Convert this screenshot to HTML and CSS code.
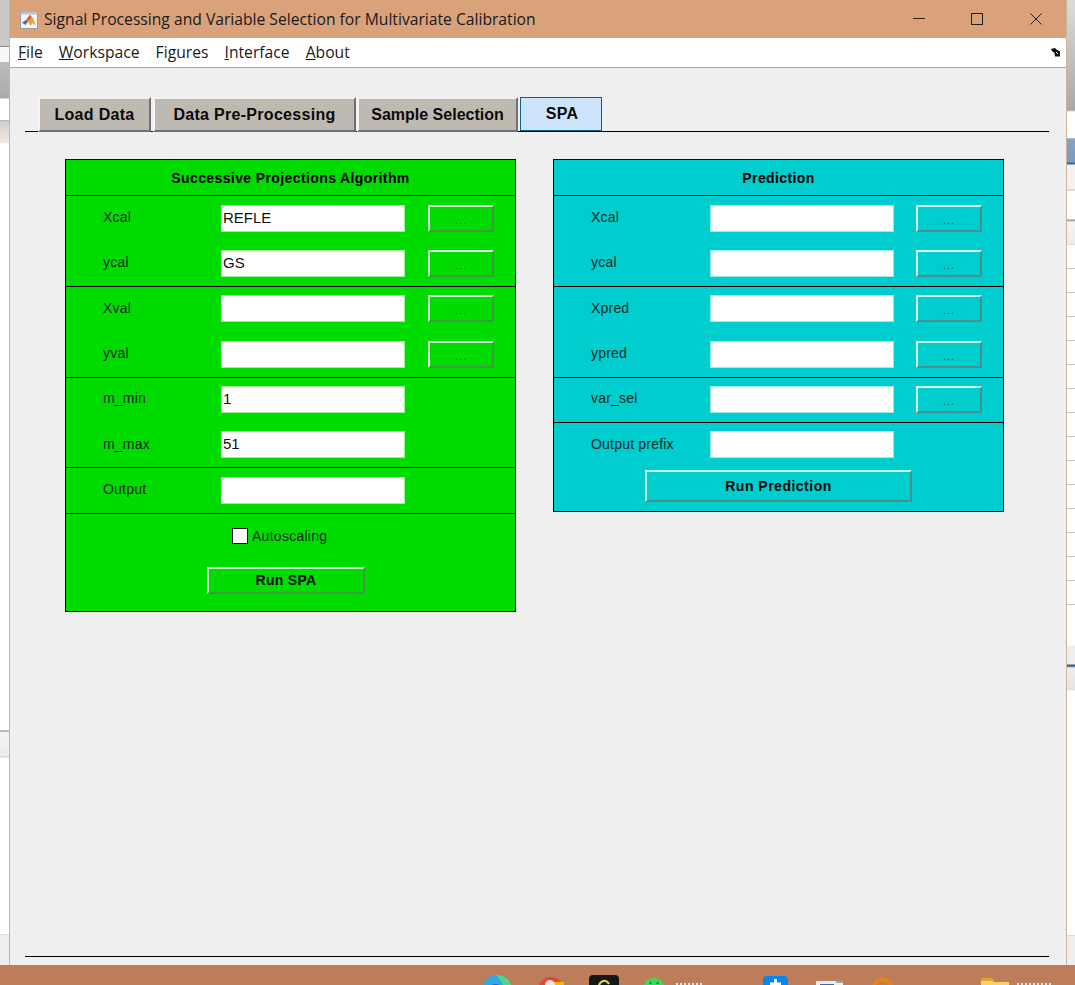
FILE: index.html
```html
<!DOCTYPE html>
<html lang="en">
<head>
<meta charset="utf-8">
<title>Signal Processing and Variable Selection for Multivariate Calibration</title>
<link rel="stylesheet" href="styles.css">
</head>
<body>
<div class="desktop">
  <div class="sliver sliver-left"></div>
  <div class="window">
    <header class="titlebar">
      <svg class="app-icon" width="18" height="18" viewBox="0 0 18 18">
        <rect x="0.5" y="0.5" width="17" height="17" fill="#f4f4f6" stroke="#9a9aa2"/>
        <rect x="0.5" y="0.5" width="17" height="3" fill="#b9c4d6"/>
        <path d="M2 11.500 L6 9 L8 10.500 L5.500 14 Z" fill="#3f6fb0"/>
        <path d="M6 9 L10 3.500 L12 7 L8 10.500 Z" fill="#d9622b"/>
        <path d="M10 3.500 L12.500 6.500 L16 14.500 L12.500 12 L10.500 15 L8 10.500 L12 7 Z" fill="#f0a030"/>
      </svg>
      <span class="title-text">Signal Processing and Variable Selection for Multivariate Calibration</span>
      <div class="win-controls">
        <svg class="ctl ctl-min" width="12" height="12" viewBox="0 0 12 12"><path d="M0 5.500H12" stroke="#222" stroke-width="1"/></svg>
        <svg class="ctl ctl-max" width="12" height="12" viewBox="0 0 12 12"><rect x="0.5" y="0.5" width="11" height="11" fill="none" stroke="#222"/></svg>
        <svg class="ctl ctl-close" width="12" height="12" viewBox="0 0 12 12"><path d="M0.5 0.5L11.500 11.500M11.500 0.5L0.5 11.500" stroke="#222" stroke-width="1"/></svg>
      </div>
    </header>
    <nav class="menubar">
      <span class="menu-item"><u>F</u>ile</span>
      <span class="menu-item"><u>W</u>orkspace</span>
      <span class="menu-item">Fi<u>g</u>ures</span>
      <span class="menu-item"><u>I</u>nterface</span>
      <span class="menu-item"><u>A</u>bout</span>
      <svg class="dock-arrow" width="10" height="9" viewBox="0 0 10 9"><path d="M0 1L4 0L6 2L9 3.500V8.500H4L3.500 5L1 3Z" fill="#111"/><path d="M5 4L7 6" stroke="#fff" stroke-width="1"/></svg>
    </nav>
    <main class="content">
      <div class="tabstrip">
        <div class="tab tab-load">Load Data</div>
        <div class="tab tab-prep">Data Pre-Processing</div>
        <div class="tab tab-sample">Sample Selection</div>
        <div class="tab tab-spa">SPA</div>
      </div>
      <div class="panels">
        <section class="panel panel-green">
          <h2 class="panel-title">Successive Projections Algorithm</h2>
          <div class="group pad-9">
            <div class="row"><span class="label">Xcal</span><div class="field" role="textbox">REFLE</div><button class="browse">...</button></div>
            <div class="row"><span class="label">ycal</span><div class="field" role="textbox">GS</div><button class="browse">...</button></div>
          </div>
          <div class="group pad-8 gap-19">
            <div class="row"><span class="label label-low">Xval</span><div class="field" role="textbox"></div><button class="browse">...</button></div>
            <div class="row"><span class="label">yval</span><div class="field" role="textbox"></div><button class="browse">...</button></div>
          </div>
          <div class="group pad-8b">
            <div class="row"><span class="label">m_min</span><div class="field" role="textbox">1</div></div>
            <div class="row"><span class="label label-low">m_max</span><div class="field" role="textbox">51</div></div>
          </div>
          <div class="group pad-9">
            <div class="row"><span class="label">Output</span><div class="field" role="textbox"></div></div>
          </div>
          <div class="foot foot-green">
            <label class="check"><span class="checkbox"></span><span class="label-plain">Autoscaling</span></label>
            <button class="run run-spa">Run SPA</button>
          </div>
        </section>
        <section class="panel panel-cyan">
          <h2 class="panel-title">Prediction</h2>
          <div class="group pad-9">
            <div class="row"><span class="label">Xcal</span><div class="field" role="textbox"></div><button class="browse">...</button></div>
            <div class="row"><span class="label">ycal</span><div class="field" role="textbox"></div><button class="browse">...</button></div>
          </div>
          <div class="group pad-8 gap-19">
            <div class="row"><span class="label label-low">Xpred</span><div class="field" role="textbox"></div><button class="browse">...</button></div>
            <div class="row"><span class="label">ypred</span><div class="field" role="textbox"></div><button class="browse">...</button></div>
          </div>
          <div class="group pad-8b">
            <div class="row"><span class="label">var_sel</span><div class="field" role="textbox"></div><button class="browse">...</button></div>
          </div>
          <div class="foot foot-cyan">
            <div class="row"><span class="label label-low">Output prefix</span><div class="field" role="textbox"></div></div>
            <button class="run run-pred">Run Prediction</button>
          </div>
        </section>
      </div>
      <div class="bottom-rule"></div>
    </main>
  </div>
  <div class="sliver sliver-right"></div>
</div>
<footer class="taskbar">
  <svg class="tb tb-edge" width="30" height="30" viewBox="0 0 30 30">
    <circle cx="15" cy="15" r="15" fill="#2fa9e0"/><path d="M14 0A15 15 0 0 1 30 15L22 12C20 7 17 3 14 0Z" fill="#4fd68a"/><path d="M5 14C9 7 19 8 22 14Z" fill="#1f6fc0"/>
  </svg>
  <svg class="tb tb-chrome" width="26" height="26" viewBox="0 0 26 26">
    <circle cx="13" cy="13" r="13" fill="#e0483e"/><path d="M14 5H26V26H14Z" fill="#f4b400"/><circle cx="12" cy="8" r="5" fill="#f3e3dc"/>
  </svg>
  <svg class="tb tb-black" width="30" height="30" viewBox="0 0 30 30">
    <rect width="30" height="30" rx="4" fill="#17171a"/><path d="M20 9C17 4 11 5 9.500 12" fill="none" stroke="#e8d84a" stroke-width="2"/>
  </svg>
  <svg class="tb tb-smile" width="22" height="22" viewBox="0 0 22 22">
    <circle cx="11" cy="11" r="11" fill="#3ed65f"/><circle cx="7.500" cy="5" r="1.200" fill="#1f8a3a"/><circle cx="14.500" cy="5" r="1.200" fill="#1f8a3a"/>
  </svg>
  <span class="tb tb-dash tb-dash-a"></span>
  <svg class="tb tb-blue" width="25" height="25" viewBox="0 0 25 25">
    <rect width="25" height="25" rx="4" fill="#0a84f0"/><path d="M12.500 3V22M7 8L18 8" stroke="#fff" stroke-width="3"/>
  </svg>
  <svg class="tb tb-doc" width="27" height="20" viewBox="0 0 27 20">
    <rect width="27" height="20" fill="#e8eef4"/><rect x="4" y="3" width="14" height="5" fill="#2a6fc0"/><rect x="20" y="0" width="7" height="2" fill="#9aa8b8"/>
  </svg>
  <svg class="tb tb-ring" width="23" height="23" viewBox="0 0 23 23">
    <circle cx="11.500" cy="11.500" r="9" fill="none" stroke="#e8811a" stroke-width="4"/><circle cx="11.500" cy="13" r="3" fill="none" stroke="#e8811a" stroke-width="2"/>
  </svg>
  <svg class="tb tb-folder" width="28" height="22" viewBox="0 0 28 22">
    <path d="M0 2H11L13 4H28V22H0Z" fill="#f7cf6b"/><path d="M0 0H11L13 3H0Z" fill="#e0a52a"/>
  </svg>
  <span class="tb tb-dash tb-dash-b"></span>
</footer>
</body>
</html>
```

FILE: styles.css
```css
* { box-sizing: border-box; }
html, body { margin: 0; height: 100%; overflow: hidden; }
body {
  width: 1075px;
  height: 985px;
  display: flex;
  flex-direction: column;
  font-family: "Liberation Sans", Arial, sans-serif;
  color: #000;
  background: #fff;
}
.desktop { flex: 0 0 965px; display: flex; }
.sliver { flex: none; height: 100%; }
.sliver-left {
  width: 9px;
  background:
    linear-gradient(#c9c9c9 0, #c9c9c9 46px, #8c8c8c 46px, #8c8c8c 47px, #f8f8f8 47px, #f8f8f8 62px,
      #bdbdbd 62px, #ababab 98px, #fff 99px, #fff 120px, #b5b5b5 120px, #d0d0d0 122px, #f6e9e2 143px,
      #fff 144px, #fff 730px, #777 731px, #f4f4f4 732px, #ececec 756px, #c8c8c8 757px, #fff 758px,
      #fff 934px, #c8c8c8 934px, #eee 935px);
}
.sliver-right {
  width: 8px;
  background:
    linear-gradient(#dcdcdc 0, #a8a8a8 110px, #fff 112px, #fff 138px, #bbb 138px, #87a3c2 140px, #7a9cc0 162px,
      #3a6690 163px, #3a6690 164px, #f7f1ee 165px, #f7f1ee 189px, #bbb 190px, #fff 191px, #fff 219px, #888 220px,
      #f5f5f5 222px, #ececec 244px, #ccc 245px, #fff 246px, #fff 627px, #c4c4c4 627px, #fff 628px, #fff 645px,
      #eee 646px, #eee 664px, #3a5f80 665px, #3a5f80 666px, #eee 668px, #e4e4e4 690px, #fff 691px, #fff 935px,
      #c8c8c8 935px, #eee 936px);
}
.sliver-right::before {
  content: "";
  display: block;
  height: 383px;
  margin-top: 245px;
  background: repeating-linear-gradient(#fff 0, #fff 23px, #c4c4c4 23px, #c4c4c4 24px);
}
.window {
  flex: none;
  width: 1058px;
  height: 965px;
  border-left: 1px solid #cdb29c;
  border-right: 1px solid #cdb29c;
  display: flex;
  flex-direction: column;
  background: #efefef;
}
.titlebar {
  flex: 0 0 38px;
  background: #d9a27b;
  display: flex;
  align-items: center;
  padding-left: 10px;
}
.app-icon { flex: none; margin-top: 1px; }
.title-text {
  margin-left: 6px;
  font-family: "Open Sans", sans-serif;
  font-size: 15.67px;
  color: #1a1a1a;
  white-space: nowrap;
}
.win-controls { margin-left: auto; display: flex; align-items: center; padding-right: 24px; }
.ctl { display: block; }
.ctl-max { margin-left: 46px; }
.ctl-close { margin-left: 47px; }
.menubar {
  flex: 0 0 30px;
  background: #fff;
  border-bottom: 1px solid #a8a8a8;
  display: flex;
  align-items: center;
  padding: 0 5px 1px 8px;
  gap: 16px;
  font-family: "Open Sans", sans-serif;
  font-size: 15.7px;
  color: #1a1a1a;
}
.menu-item { white-space: nowrap; }
.dock-arrow { margin-left: auto; }
.content {
  flex: 1;
  display: flex;
  flex-direction: column;
  padding: 29px 17px 8px 15px;
}
.tabstrip {
  display: flex;
  align-items: flex-start;
  height: 35px;
  padding-left: 13px;
  border-bottom: 1px solid #000;
}
.tab {
  height: 35px;
  display: flex;
  align-items: center;
  justify-content: center;
  font-size: 16px;
  font-weight: 700;
  letter-spacing: 0.3px;
  background: #beb9b1;
  color: #0b0b0b;
  border-top: 2px solid #f4f4f4;
  border-left: 2px solid #f4f4f4;
  border-right: 2px solid #6f6f6f;
  border-bottom: 2px solid #6f6f6f;
  white-space: nowrap;
}
.tab-load { width: 113px; }
.tab-prep { width: 203px; margin-left: 2px; }
.tab-sample { width: 161px; margin-left: 1px; letter-spacing: 0; }
.tab-spa {
  width: 82px;
  margin-left: 2px;
  height: 34px;
  padding-left: 2px;
  background: #cbe4f9;
  border: 1px solid #0f5e8c;
}
.panels {
  display: flex;
  align-items: flex-start;
  gap: 37px;
  margin-top: 27px;
  padding-left: 40px;
}
.panel {
  flex: none;
  width: 451px;
  border: 1px solid #000;
}
.panel-green { background: #00dc00; --off: #3f9b3f; --dots: #0f7f0f; }
.panel-cyan { background: #00cdcd; --off: #4a8f8f; --dots: #0b5f5f; }
.panel-title {
  margin: 0;
  height: 36px;
  display: flex;
  align-items: center;
  justify-content: center;
  font-size: 14px;
  font-weight: 700;
  letter-spacing: 0.39px;
  border-bottom: 1px solid #000;
}
.group {
  display: flex;
  flex-direction: column;
  border-bottom: 1px solid #000;
}
.pad-9 { padding: 9px 0; gap: 18px; }
.pad-8 { padding: 8px 0 9px; }
.pad-8b { padding: 8px 0 9px; gap: 18px; }
.gap-19 { gap: 19px; }
.row {
  display: grid;
  grid-template-columns: 132px 184px 66px;
  column-gap: 23px;
  height: 27px;
  align-items: center;
}
.panel-cyan .row { grid-template-columns: 134px 184px 66px; column-gap: 22px; }
.label {
  padding-left: 37px;
  font-size: 14px;
  letter-spacing: 0.2px;
  margin-top: -3px;
  white-space: nowrap;
  color: #0a2a0a;
}
.label-low { margin-top: -1px; }
.panel-cyan .label { color: #0a2a2a; }
.field {
  height: 27px;
  width: 184px;
  background: #fff;
  background-clip: padding-box;
  border: 1px solid rgba(255, 255, 255, 0.6);
  padding: 0 1px;
  font-size: 15px;
  line-height: 24px;
  color: #111;
}
.browse {
  height: 27px;
  width: 66px;
  padding: 3px 0 0;
  background: transparent;
  border-style: solid;
  border-width: 2px;
  border-color: rgba(255, 255, 255, 0.85) var(--off) var(--off) rgba(255, 255, 255, 0.85);
  font-family: "Liberation Sans", Arial, sans-serif;
  font-size: 11px;
  letter-spacing: 1px;
  line-height: 12px;
  color: var(--dots);
}
.foot { display: flex; flex-direction: column; align-items: flex-start; }
.foot-green { padding: 14px 0 17px; }
.foot-cyan { padding: 8px 0 9px; }
.check { display: flex; align-items: center; margin-left: 166px; height: 16px; }
.checkbox {
  flex: none;
  width: 16px;
  height: 16px;
  background: #fff;
  border: 1px solid #1a1a1a;
}
.label-plain { margin-left: 4px; font-size: 14px; letter-spacing: 0.27px; color: #0a2a0a; margin-top: -1px; }
.run {
  padding: 0;
  background: transparent;
  border-style: solid;
  border-width: 2px;
  border-color: rgba(255, 255, 255, 0.8) var(--off) var(--off) rgba(255, 255, 255, 0.8);
  font-family: "Liberation Sans", Arial, sans-serif;
  font-size: 14px;
  font-weight: 700;
  color: #0a0a0a;
}
.run-spa { width: 158px; height: 27px; margin: 23px 0 0 141px; padding-bottom: 2px; letter-spacing: 0.3px; }
.run-pred { width: 267px; height: 32px; margin: 12px 0 0 91px; letter-spacing: 0.5px; }
.bottom-rule { margin-top: auto; height: 1px; background: #000; }
.taskbar {
  flex: 0 0 20px;
  height: 20px;
  background: #bc7d58;
  overflow: hidden;
  display: flex;
  align-items: flex-start;
  padding-left: 482px;
}
.tb { flex: none; display: block; }
.tb-edge { margin-top: 10px; }
.tb-chrome { margin: 12px 0 0 26px; }
.tb-black { margin: 10px 0 0 25px; }
.tb-smile { margin: 13px 0 0 24px; }
.tb-dash { height: 2px; border-top: 2px dotted rgba(255, 255, 255, 0.75); margin-top: 18px; }
.tb-dash-a { width: 26px; margin-left: 11px; }
.tb-blue { margin: 11px 0 0 61px; }
.tb-doc { margin: 16px 0 0 28px; }
.tb-ring { margin: 12px 0 0 28px; }
.tb-folder { margin: 13px 0 0 87px; }
.tb-dash-b { width: 34px; margin-left: 8px; }
```
